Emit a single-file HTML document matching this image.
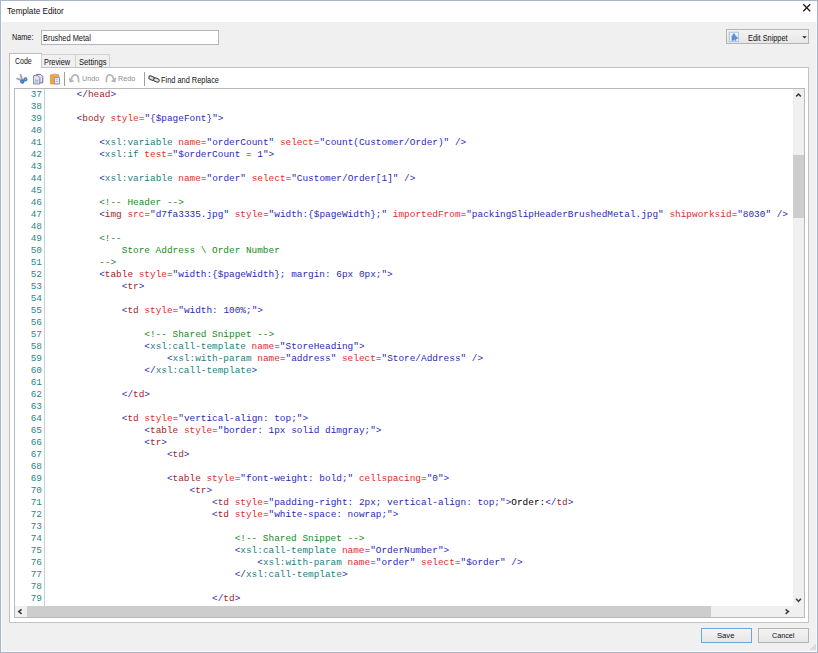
<!DOCTYPE html>
<html><head><meta charset="utf-8">
<style>
*{margin:0;padding:0;box-sizing:border-box}
html,body{width:818px;height:653px;overflow:hidden;background:#f0f0f0}
body{position:relative;font-family:"Liberation Sans",sans-serif;color:#1e1e1e}
.abs{position:absolute}
.ui{position:absolute;transform-origin:0 0;font-size:8.4px;line-height:10px;white-space:nowrap;color:#111}
#bl{left:0;top:0;width:1px;height:653px;background:#a9b6c6}
#br{left:817px;top:0;width:1px;height:653px;background:#a9b6c6}
#bt{left:0;top:0;width:818px;height:1px;background:#a9b6c6}
#bb{left:0;top:652px;width:818px;height:1px;background:#a9b6c6}
#title{left:1px;top:1px;width:816px;height:21px;background:#fff}
#tb{left:41px;top:30px;width:178px;height:15px;background:#fff;border:1px solid #b4b6bb}
.btn{position:absolute;border:1px solid #b4b4b4;background:linear-gradient(#f4f4f4,#e6e6e6)}
.tab{position:absolute;border:1px solid #d2d2d2;border-bottom:none;background:#f0f0f0}
#panel{left:9px;top:67px;width:800px;height:556px;background:#fff;border:1px solid #c2c2c2}
#editor{left:14px;top:88px;width:791px;height:530px;background:#fff;border:1px solid #b9b9b9}
.code{position:absolute;font-family:"Liberation Mono",monospace;font-size:9.42px;line-height:12px;white-space:pre}
.ln{height:12px}
#nums{left:20px;top:89px;width:22px;text-align:right;color:#2b8686}
#src{left:54px;top:89px;color:#000}
.b{color:#2a2ab8}.e{color:#a02828}.x{color:#1f8080}.a{color:#dc2e2e}.c{color:#1a8a1a}
#sep{left:44px;top:89px;width:1px;height:517px;border-left:1px solid #c0d4d4}
.sbt{background:#f0f0f0}
.thumb{background:#cdcdcd}
</style></head><body>
<div class="abs" id="title"></div>
<div class="abs" style="left:1px;top:22px;width:1px;height:630px;background:#f7fbff"></div><div class="abs" style="left:816px;top:22px;width:1px;height:630px;background:#f7fbff"></div><div class="abs" style="left:1px;top:651px;width:816px;height:1px;background:#f7fbff"></div><div class="abs" id="bl"></div><div class="abs" id="br"></div><div class="abs" id="bt"></div><div class="abs" id="bb"></div>
<div class="ui" style="left:7.30px;top:6.10px;font-size:8.3px;transform:scaleX(0.9862)">Template Editor</div>
<svg class="abs" style="left:802px;top:3px" width="10" height="10" viewBox="0 0 10 10"><path d="M1.3 1.3L8.2 8.2M8.2 1.3L1.3 8.2" stroke="#1a1a1a" stroke-width="1.3"/></svg>

<div class="ui" style="left:11.60px;top:33.10px;font-size:8.2px;transform:scaleX(0.8875)">Name:</div>
<div class="abs" id="tb"></div>
<div class="ui" style="left:42.80px;top:33.50px;font-size:8.2px;transform:scaleX(0.9057)">Brushed Metal</div>

<div class="btn" style="left:726px;top:29px;width:83px;height:15px"></div>
<div class="ui" style="left:748.00px;top:34.10px;font-size:8.2px;transform:scaleX(0.8956)">Edit Snippet</div>
<svg class="abs" style="left:801px;top:35px" width="7" height="5"><path d="M1.2 1.2h4.6l-2.3 2.4z" fill="#222"/></svg>

<div class="abs" id="panel"></div>
<div class="tab" style="left:9px;top:53px;width:33px;height:15px;background:#fff;border-color:#bdbdbd"></div>
<div class="tab" style="left:41px;top:54px;width:35px;height:13px"></div>
<div class="tab" style="left:75px;top:54px;width:35px;height:13px"></div>
<div class="ui" style="left:14.80px;top:57.00px;font-size:8.2px;transform:scaleX(0.8550)">Code</div>
<div class="ui" style="left:43.90px;top:57.80px;font-size:8.2px;transform:scaleX(0.8967)">Preview</div>
<div class="ui" style="left:79.10px;top:57.80px;font-size:8.2px;transform:scaleX(0.9300)">Settings</div>

<!-- toolbar -->
<div class="abs" style="left:64px;top:72px;width:1px;height:14px;background:#a0a0a0"></div>
<div class="abs" style="left:144px;top:72px;width:1px;height:14px;background:#a0a0a0"></div>
<div class="ui" style="left:81.60px;top:74.30px;font-size:8.0px;transform:scaleX(0.9000);color:#8e8e8e">Undo</div>
<div class="ui" style="left:118.20px;top:74.30px;font-size:8.0px;transform:scaleX(0.9053);color:#8e8e8e">Redo</div>
<div class="ui" style="left:161.10px;top:75.70px;font-size:8.2px;transform:scaleX(0.9031)">Find and Replace</div>

<div class="abs" id="editor"></div>
<div class="abs" id="sep"></div>
<div class="code" id="nums"><div class="ln">37</div><div class="ln">38</div><div class="ln">39</div><div class="ln">40</div><div class="ln">41</div><div class="ln">42</div><div class="ln">43</div><div class="ln">44</div><div class="ln">45</div><div class="ln">46</div><div class="ln">47</div><div class="ln">48</div><div class="ln">49</div><div class="ln">50</div><div class="ln">51</div><div class="ln">52</div><div class="ln">53</div><div class="ln">54</div><div class="ln">55</div><div class="ln">56</div><div class="ln">57</div><div class="ln">58</div><div class="ln">59</div><div class="ln">60</div><div class="ln">61</div><div class="ln">62</div><div class="ln">63</div><div class="ln">64</div><div class="ln">65</div><div class="ln">66</div><div class="ln">67</div><div class="ln">68</div><div class="ln">69</div><div class="ln">70</div><div class="ln">71</div><div class="ln">72</div><div class="ln">73</div><div class="ln">74</div><div class="ln">75</div><div class="ln">76</div><div class="ln">77</div><div class="ln">78</div><div class="ln">79</div></div>
<div class="code" id="src"><div class="ln">    <span class="b">&lt;/</span><span class="e">head</span><span class="b">&gt;</span></div><div class="ln"></div><div class="ln">    <span class="b">&lt;</span><span class="e">body</span> <span class="a">style</span><span class="b">=</span><span class="b">"{$pageFont}"</span><span class="b">&gt;</span></div><div class="ln"></div><div class="ln">        <span class="b">&lt;</span><span class="x">xsl:variable</span> <span class="a">name</span><span class="b">=</span><span class="b">"orderCount"</span> <span class="a">select</span><span class="b">=</span><span class="b">"count(Customer/Order)"</span> <span class="b">/&gt;</span></div><div class="ln">        <span class="b">&lt;</span><span class="x">xsl:if</span> <span class="a">test</span><span class="b">=</span><span class="b">"$orderCount = 1"</span><span class="b">&gt;</span></div><div class="ln"></div><div class="ln">        <span class="b">&lt;</span><span class="x">xsl:variable</span> <span class="a">name</span><span class="b">=</span><span class="b">"order"</span> <span class="a">select</span><span class="b">=</span><span class="b">"Customer/Order[1]"</span> <span class="b">/&gt;</span></div><div class="ln"></div><div class="ln">        <span class="c">&lt;!-- Header --&gt;</span></div><div class="ln">        <span class="b">&lt;</span><span class="e">img</span> <span class="a">src</span><span class="b">=</span><span class="b">"d7fa3335.jpg"</span> <span class="a">style</span><span class="b">=</span><span class="b">"width:{$pageWidth};"</span> <span class="a">importedFrom</span><span class="b">=</span><span class="b">"packingSlipHeaderBrushedMetal.jpg"</span> <span class="a">shipworksid</span><span class="b">=</span><span class="b">"8030"</span> <span class="b">/&gt;</span></div><div class="ln"></div><div class="ln">        <span class="c">&lt;!--</span></div><div class="ln"><span class="c">            Store Address \ Order Number</span></div><div class="ln"><span class="c">        --&gt;</span></div><div class="ln">        <span class="b">&lt;</span><span class="e">table</span> <span class="a">style</span><span class="b">=</span><span class="b">"width:{$pageWidth}; margin: 6px 0px;"</span><span class="b">&gt;</span></div><div class="ln">            <span class="b">&lt;</span><span class="e">tr</span><span class="b">&gt;</span></div><div class="ln"></div><div class="ln">            <span class="b">&lt;</span><span class="e">td</span> <span class="a">style</span><span class="b">=</span><span class="b">"width: 100%;"</span><span class="b">&gt;</span></div><div class="ln"></div><div class="ln">                <span class="c">&lt;!-- Shared Snippet --&gt;</span></div><div class="ln">                <span class="b">&lt;</span><span class="x">xsl:call-template</span> <span class="a">name</span><span class="b">=</span><span class="b">"StoreHeading"</span><span class="b">&gt;</span></div><div class="ln">                    <span class="b">&lt;</span><span class="x">xsl:with-param</span> <span class="a">name</span><span class="b">=</span><span class="b">"address"</span> <span class="a">select</span><span class="b">=</span><span class="b">"Store/Address"</span> <span class="b">/&gt;</span></div><div class="ln">                <span class="b">&lt;/</span><span class="x">xsl:call-template</span><span class="b">&gt;</span></div><div class="ln"></div><div class="ln">            <span class="b">&lt;/</span><span class="e">td</span><span class="b">&gt;</span></div><div class="ln"></div><div class="ln">            <span class="b">&lt;</span><span class="e">td</span> <span class="a">style</span><span class="b">=</span><span class="b">"vertical-align: top;"</span><span class="b">&gt;</span></div><div class="ln">                <span class="b">&lt;</span><span class="e">table</span> <span class="a">style</span><span class="b">=</span><span class="b">"border: 1px solid dimgray;"</span><span class="b">&gt;</span></div><div class="ln">                <span class="b">&lt;</span><span class="e">tr</span><span class="b">&gt;</span></div><div class="ln">                    <span class="b">&lt;</span><span class="e">td</span><span class="b">&gt;</span></div><div class="ln"></div><div class="ln">                    <span class="b">&lt;</span><span class="e">table</span> <span class="a">style</span><span class="b">=</span><span class="b">"font-weight: bold;"</span> <span class="a">cellspacing</span><span class="b">=</span><span class="b">"0"</span><span class="b">&gt;</span></div><div class="ln">                        <span class="b">&lt;</span><span class="e">tr</span><span class="b">&gt;</span></div><div class="ln">                            <span class="b">&lt;</span><span class="e">td</span> <span class="a">style</span><span class="b">=</span><span class="b">"padding-right: 2px; vertical-align: top;"</span><span class="b">&gt;</span>Order:<span class="b">&lt;/</span><span class="e">td</span><span class="b">&gt;</span></div><div class="ln">                            <span class="b">&lt;</span><span class="e">td</span> <span class="a">style</span><span class="b">=</span><span class="b">"white-space: nowrap;"</span><span class="b">&gt;</span></div><div class="ln"></div><div class="ln">                                <span class="c">&lt;!-- Shared Snippet --&gt;</span></div><div class="ln">                                <span class="b">&lt;</span><span class="x">xsl:call-template</span> <span class="a">name</span><span class="b">=</span><span class="b">"OrderNumber"</span><span class="b">&gt;</span></div><div class="ln">                                    <span class="b">&lt;</span><span class="x">xsl:with-param</span> <span class="a">name</span><span class="b">=</span><span class="b">"order"</span> <span class="a">select</span><span class="b">=</span><span class="b">"$order"</span> <span class="b">/&gt;</span></div><div class="ln">                                <span class="b">&lt;/</span><span class="x">xsl:call-template</span><span class="b">&gt;</span></div><div class="ln"></div><div class="ln">                            <span class="b">&lt;/</span><span class="e">td</span><span class="b">&gt;</span></div></div>

<!-- scrollbars -->
<div class="abs sbt" style="left:793px;top:89px;width:11px;height:528px"></div>
<div class="abs sbt" style="left:15px;top:606px;width:789px;height:11px"></div>
<div class="abs thumb" style="left:793px;top:155px;width:11px;height:63px"></div>
<div class="abs thumb" style="left:27px;top:606px;width:684px;height:11px"></div>
<svg class="abs" style="left:0;top:0" width="818" height="653"><g stroke="#3a3a3a" stroke-width="1.5" fill="none">
<path d="M796.1 96.6L798.5 94L800.9 96.6"/><path d="M796.1 598.8L798.5 601.4L800.9 598.8"/>
<path d="M785.6 609.4L788.4 611.6L785.6 613.8"/><path d="M21.6 609.4L18.8 611.6L21.6 613.8"/></g></svg>

<div class="btn" style="left:701px;top:628px;width:51px;height:15px;border-color:#6aa6e2"></div>
<div class="btn" style="left:758px;top:628px;width:51px;height:15px"></div>
<div class="ui" style="left:717.40px;top:631.00px;font-size:8.0px;transform:scaleX(0.9556)">Save</div>
<div class="ui" style="left:771.70px;top:631.00px;font-size:8.0px;transform:scaleX(0.9000)">Cancel</div>

<svg class="abs" style="left:14px;top:71px" width="16" height="16" viewBox="0 0 16 16">
<path d="M3.2 7.6L8 9.4M6.6 4L8.2 8.8" stroke="#a4a4a4" stroke-width="2" stroke-linecap="round" fill="none"/>
<circle cx="8.3" cy="10.6" r="2.2" fill="#3d74c4"/><circle cx="11.4" cy="8.4" r="2.1" fill="#4a80cc"/>
<circle cx="8.2" cy="10.7" r="0.6" fill="#8db4e8"/><circle cx="11.5" cy="8.4" r="0.6" fill="#8db4e8"/>
</svg>
<svg class="abs" style="left:30px;top:71px" width="16" height="16" viewBox="0 0 16 16">
<path d="M6.4 3.4h4.2l2.2 2.2v6.2h-6.4z" fill="#e6e0f4" stroke="#76699c" stroke-width="1"/>
<path d="M3.6 4.6h4.2l2 2v6.4h-6.2z" fill="#dfe7f6" stroke="#858aa2" stroke-width="1"/>
<path d="M4.8 9.2h3.6M4.8 11h3.6" stroke="#8c9fc6" stroke-width="0.9"/>
</svg>
<svg class="abs" style="left:47px;top:71px" width="16" height="16" viewBox="0 0 16 16">
<rect x="3.4" y="3.6" width="8.4" height="9.4" rx="0.6" fill="#f2a43a" stroke="#d88a20" stroke-width="0.6"/>
<rect x="5.8" y="2.6" width="3.4" height="2" fill="#c9b7b7"/>
<rect x="7.3" y="6.7" width="5.2" height="6.2" fill="#eef0fa" stroke="#8a8fa8" stroke-width="0.9"/>
<path d="M8.6 8.8h2.6M8.6 10.6h2.6" stroke="#a0a6d0" stroke-width="0.8"/>
</svg>
<svg class="abs" style="left:66px;top:71px" width="16" height="16" viewBox="0 0 16 16">
<path d="M5.4 8.6C5.6 5.2 8 3.8 9.8 3.9C11.9 4.1 12.8 6.2 12.6 11.4" stroke="#b4b4b4" stroke-width="1.7" fill="none"/>
<path d="M2.8 6.2L3.6 11.6L8.4 10.4z" fill="#b4b4b4"/>
</svg>
<svg class="abs" style="left:103px;top:71px" width="16" height="16" viewBox="0 0 16 16">
<path d="M10.6 8.6C10.4 5.2 8 3.8 6.2 3.9C4.1 4.1 3.2 6.2 3.4 11.4" stroke="#b4b4b4" stroke-width="1.7" fill="none"/>
<path d="M13.2 6.2L12.4 11.6L7.6 10.4z" fill="#b4b4b4"/>
</svg>
<svg class="abs" style="left:146px;top:71px" width="16" height="16" viewBox="0 0 16 16">
<g transform="rotate(22 8 8.5)">
<rect x="2.4" y="6.4" width="5.8" height="3.4" rx="1.7" fill="#d8dce4" stroke="#4a4a4a" stroke-width="1.1"/>
<rect x="7.6" y="6.4" width="5.8" height="3.4" rx="1.7" fill="#e4e8f0" stroke="#4a4a4a" stroke-width="1.1"/>
</g></svg>
<svg class="abs" style="left:726px;top:29px" width="16" height="16" viewBox="0 0 16 16">
<rect x="3.2" y="3.2" width="9.4" height="9.4" fill="#e4f4fb" stroke="#a9bfdf" stroke-width="0.9"/>
<path d="M5.6 6.4h1.3a1.2 1.2 0 1 1 2 0h1.4v1.5a1.1 1.1 0 1 1 0 1.9v1.9h-1.6l-0.5-1.8l-0.6 1.8h-2z" fill="#5d8fd6"/>
</svg>
<svg class="abs" style="left:808px;top:642px" width="10" height="10"><g fill="#bcbcbc"><rect x="6.5" y="2.5" width="1.2" height="1.2"/><rect x="4.5" y="4.5" width="1.2" height="1.2"/><rect x="6.5" y="4.5" width="1.2" height="1.2"/><rect x="2.5" y="6.5" width="1.2" height="1.2"/><rect x="4.5" y="6.5" width="1.2" height="1.2"/><rect x="6.5" y="6.5" width="1.2" height="1.2"/></g></svg>
</body></html>
